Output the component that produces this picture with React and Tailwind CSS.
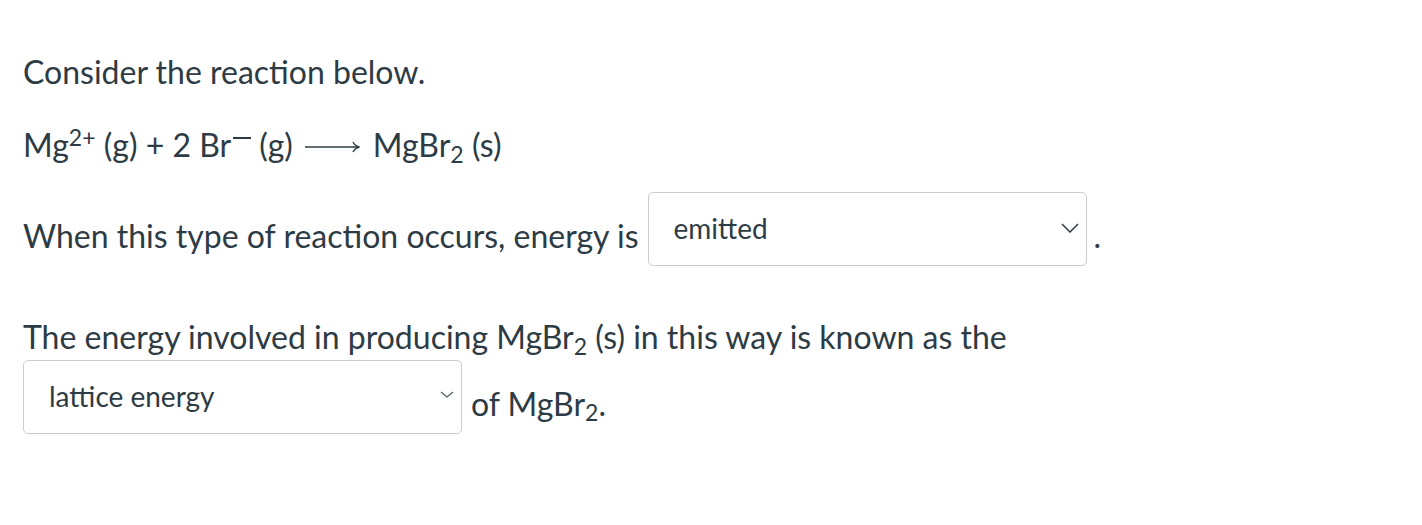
import React from 'react';

const Chevron = ({ small }) =>
  small ? (
    <svg width="14" height="7" viewBox="0 0 14 7" fill="none" className="shrink-0">
      <path d="M1 1l6 5 6-5" stroke="#4a5863" strokeWidth="1.1" />
    </svg>
  ) : (
    <svg width="18" height="10" viewBox="0 0 18 10" fill="none" className="shrink-0">
      <path d="M1 1l8 8 8-8" stroke="#2d3b45" strokeWidth="1.5" />
    </svg>
  );

const FakeSelect = ({ value, className, small, chevronClass }) => (
  <div className={`flex items-center justify-between h-[74px] border border-[#c7cdd1] rounded-[5px] bg-white pl-[25px] ${className}`}>
    <span className="text-[28px] leading-none -mt-[2px]">{value}</span>
    <span className={chevronClass}>
      <Chevron small={small} />
    </span>
  </div>
);

export default function App() {
  return (
    <div className="min-h-screen bg-white text-[#2d3b45] pl-[23px] font-['Lato','Liberation_Sans',sans-serif] text-[32px]">
      <p className="pt-[51px] leading-[42px]">Consider the reaction below.</p>

      <p className="mt-[31px] leading-[42px] flex items-center">
        <span>
          Mg<sup className="text-[23px]">2+</sup> (g) + 2 Br
          <span className="inline-block align-top mt-[13px] ml-[2px] mr-[8px] w-[18px] h-[2px] bg-[#2d3b45]"></span>
          (g)
        </span>
        <svg width="56" height="14" viewBox="0 0 56 14" className="ml-[12px] mr-[12px] mt-[4px]">
          <path d="M0 7h54" stroke="#2d3b45" strokeWidth="1.5" fill="none" />
          <path d="M48 2q2 4 6.5 5q-4.5 1-6.5 5" stroke="#2d3b45" strokeWidth="1.4" fill="none" />
        </svg>
        <span>
          MgBr<sub className="text-[23px]">2</sub> (s)
        </span>
      </p>

      <div className="mt-[26px] flex items-center">
        <span className="leading-[42px] mt-[14px]">When this type of reaction occurs, energy is</span>
        <FakeSelect value="emitted" className="ml-[9px] w-[439px] pr-[7px]" chevronClass="-mt-[2px]" />
        <span className="ml-[7px] mt-[14px]">.</span>
      </div>

      <p className="mt-[50px] leading-[42px]">
        The energy involved in producing MgBr<sub className="text-[23px]">2</sub> (s) in this way is known as the
      </p>

      <div className="mt-[2px] flex items-center">
        <FakeSelect value="lattice energy" className="w-[439px] pr-[7px]" small chevronClass="-mt-[6px]" />
        <span className="ml-[9px] mt-[13px]">
          of MgBr<sub className="text-[23px]">2</sub>.
        </span>
      </div>
    </div>
  );
}
